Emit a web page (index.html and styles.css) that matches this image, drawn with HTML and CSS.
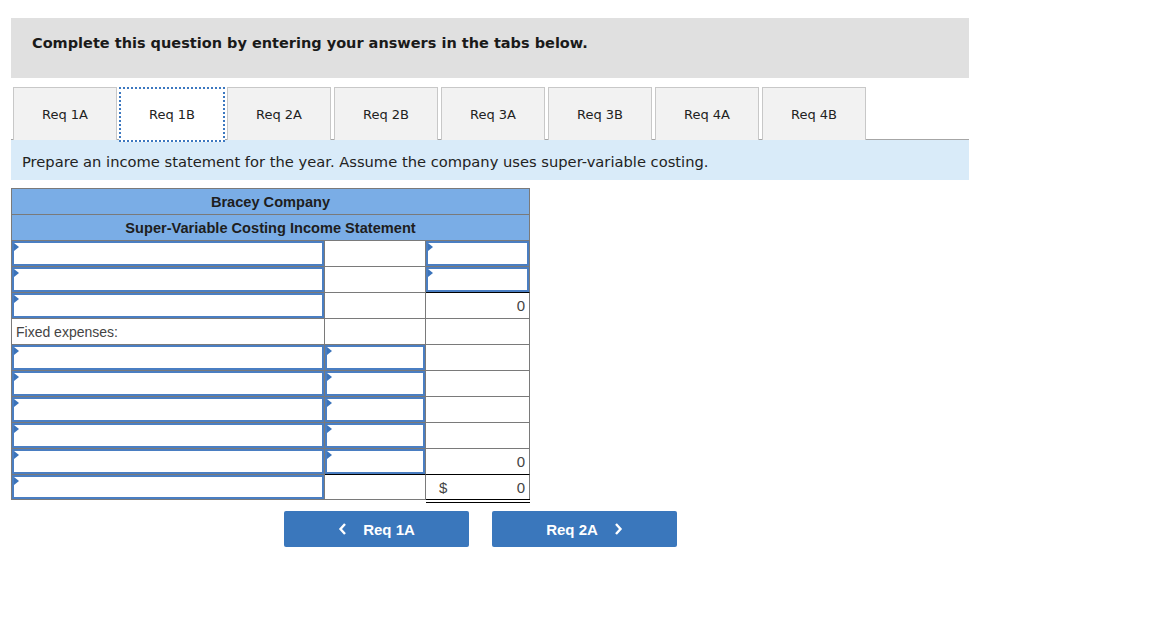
FILE: index.html
```html
<!DOCTYPE html>
<html>
<head>
<meta charset="utf-8">
<link rel="stylesheet" href="styles.css">
</head>
<body>
<div class="page">
  <div class="prompt">Complete this question by entering your answers in the tabs below.</div>
  <div class="tabs">
    <div class="tab">Req 1A</div>
    <div class="tab active">Req 1B</div>
    <div class="tab">Req 2A</div>
    <div class="tab">Req 2B</div>
    <div class="tab">Req 3A</div>
    <div class="tab">Req 3B</div>
    <div class="tab">Req 4A</div>
    <div class="tab">Req 4B</div>
  </div>
  <div class="band">Prepare an income statement for the year. Assume the company uses super-variable costing.</div>

  <div class="stmt">
    <div class="hrow">Bracey Company</div>
    <div class="hrow">Super-Variable Costing Income Statement</div>

    <div class="row">
      <div class="cell"><div class="inp"></div></div>
      <div class="cell"></div>
      <div class="cell"><div class="inp"></div></div>
    </div>
    <div class="row">
      <div class="cell"><div class="inp"></div></div>
      <div class="cell"></div>
      <div class="cell"><div class="inp"></div></div>
    </div>
    <div class="row">
      <div class="cell"><div class="inp"></div></div>
      <div class="cell"></div>
      <div class="cell num topline">0</div>
    </div>
    <div class="row">
      <div class="cell label">Fixed expenses:</div>
      <div class="cell"></div>
      <div class="cell"></div>
    </div>
    <div class="row">
      <div class="cell"><div class="inp"></div></div>
      <div class="cell"><div class="inp"></div></div>
      <div class="cell"></div>
    </div>
    <div class="row">
      <div class="cell"><div class="inp"></div></div>
      <div class="cell"><div class="inp"></div></div>
      <div class="cell"></div>
    </div>
    <div class="row">
      <div class="cell"><div class="inp"></div></div>
      <div class="cell"><div class="inp"></div></div>
      <div class="cell"></div>
    </div>
    <div class="row">
      <div class="cell"><div class="inp"></div></div>
      <div class="cell"><div class="inp"></div></div>
      <div class="cell"></div>
    </div>
    <div class="row">
      <div class="cell"><div class="inp"></div></div>
      <div class="cell"><div class="inp"></div></div>
      <div class="cell num">0</div>
    </div>
    <div class="row last">
      <div class="cell"><div class="inp"></div></div>
      <div class="cell topline"></div>
      <div class="cell num topline total"><span class="cur">$</span><span>0</span></div>
    </div>
  </div>

  <div class="nav">
    <div class="btn"><svg class="chev" width="10" height="14" viewBox="0 0 10 14"><polyline points="7,2 2.5,7 7,12" fill="none" stroke="#fff" stroke-width="2.4"/></svg><span>Req 1A</span></div>
    <div class="btn"><span>Req 2A</span><svg class="chev" width="10" height="14" viewBox="0 0 10 14"><polyline points="3,2 7.5,7 3,12" fill="none" stroke="#fff" stroke-width="2.4"/></svg></div>
  </div>
</div>
</body>
</html>
```

FILE: styles.css
```css
* { box-sizing: border-box; }
body { margin: 0; background: #fff; }
.page { padding: 18px 0 0 11px; width: 969px; }

.prompt {
  height: 60px;
  background: #e0e0e0;
  padding: 16px 0 0 21px;
  font-family: "DejaVu Sans", Verdana, sans-serif;
  font-weight: bold;
  font-size: 14.5px;
  line-height: 18px;
  color: #1a1a1a;
}

.tabs {
  margin-top: 9px;
  height: 53px;
  padding-left: 2px;
  display: flex;
  gap: 3px;
  border-bottom: 1px solid #a6a6a6;
}
.tab {
  width: 104px;
  height: 53px;
  background: #f2f2f2;
  border: 1px solid #c8c8c8;
  border-bottom: none;
  display: flex;
  align-items: center;
  justify-content: center;
  padding-top: 1px;
  font-family: "DejaVu Sans", Verdana, sans-serif;
  font-size: 13px;
  color: #222;
}
.tab.active {
  background: #fff;
  border: 2px dotted #3c78c0;
  height: 55px;
  margin-bottom: -2px;
  width: 106px;
  margin-left: -1px;
  margin-right: -1px;
  padding-top: 0;
}

.band {
  height: 40px;
  background: #d9ebf9;
  padding: 2px 0 0 11px;
  display: flex;
  align-items: center;
  font-family: "DejaVu Sans", Verdana, sans-serif;
  font-size: 14.7px;
  color: #222;
}

.stmt {
  margin-top: 8px;
  width: 519px;
  border-left: 1px solid #7a7a7a;
  border-top: 1px solid #7a7a7a;
  font-family: "Liberation Sans", Arial, sans-serif;
  font-size: 14px;
  color: #444;
}
.hrow {
  height: 26px;
  background: #7aade6;
  border-right: 1px solid #7a7a7a;
  border-bottom: 1px solid #7a7a7a;
  display: flex;
  align-items: center;
  justify-content: center;
  font-weight: bold;
  font-size: 14.6px;
  color: #1e1e1e;
}
.row {
  display: grid;
  grid-template-columns: 313px 101px 104px;
  height: 26px;
}
.row.last { height: 25px; }
.cell {
  border-right: 1px solid #7a7a7a;
  border-bottom: 1px solid #7a7a7a;
  display: flex;
  align-items: center;
  min-width: 0;
}
.cell.label { padding-left: 4px; color: #444; }
.cell.num { justify-content: flex-end; padding-right: 4px; font-size: 15px; }
.cell.topline { border-top: 1px solid #000; margin-top: -1px; }
.cell.total { justify-content: space-between; padding-left: 13px; position: relative; }
.cell.total::after {
  content: "";
  position: absolute;
  left: 0; right: -1px; bottom: -4px;
  border-top: 1px solid #000;
  border-bottom: 1px solid #000;
  height: 2px;
}

.inp {
  width: 100%;
  height: 100%;
  border: 2px solid #4a7ec2;
  background: #fff;
  position: relative;
}
.inp::before {
  content: "";
  position: absolute;
  left: 0; top: 0;
  border-left: 5px solid #3b74bb;
  border-top: 4px solid transparent;
  border-bottom: 4px solid transparent;
}

.nav {
  margin: 11px 0 0 273px;
  display: flex;
  gap: 23px;
}
.btn {
  width: 185px;
  height: 36px;
  background: #3a77bc;
  border-radius: 2px;
  display: flex;
  align-items: center;
  justify-content: center;
  gap: 15px;
  color: #fff;
  font-family: "Liberation Sans", Arial, sans-serif;
  font-weight: bold;
  font-size: 15px;
}
.chev { display: block; }
```
